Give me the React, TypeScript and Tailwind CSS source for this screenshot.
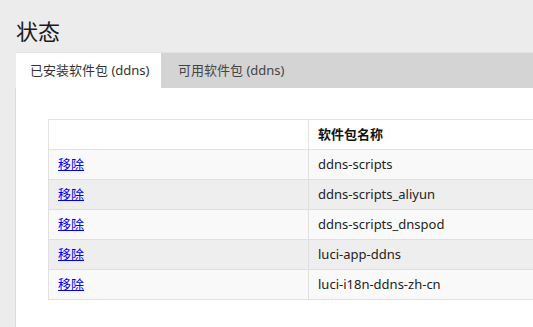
const packages = [
  "ddns-scripts",
  "ddns-scripts_aliyun",
  "ddns-scripts_dnspod",
  "luci-app-ddns",
  "luci-i18n-ddns-zh-cn",
];

export default function App() {
  return (
    <div
      className="w-[533px] h-[327px] overflow-hidden bg-[#ececec] text-[#222] flex flex-col"
      style={{ fontFamily: '"Noto Sans", "Noto Sans CJK SC", sans-serif' }}
    >
      <h2 className="pl-[16px] pt-[16px] h-[52px] text-[22px] leading-[30px] font-normal text-[#1a1a1a]">
        状态
      </h2>

      {/* Tabs */}
      <div className="ml-[16px] flex h-[36px] bg-[#d4d4d4] border-t border-[#e4e4e4] text-[13px]">
        <div className="w-[145px] bg-white flex items-center pl-[14px] text-[#333]">
          已安装软件包 (ddns)
        </div>
        <div className="flex items-center pl-[17px] text-[#444]">可用软件包 (ddns)</div>
      </div>

      {/* Panel */}
      <div className="ml-[15px] flex-1 bg-white border-l border-[#dcdcdc] pl-[32px] pt-[31px] overflow-hidden">
        <table className="w-[600px] border-collapse text-[13px]">
          <thead>
            <tr className="h-[30px] bg-white">
              <th className="w-[260px] border border-[#e3e3e3]"></th>
              <th className="text-left font-bold pl-[9px] border border-[#e3e3e3] text-[#111]">
                软件包名称
              </th>
            </tr>
          </thead>
          <tbody>
            {packages.map((p, i) => (
              <tr
                key={p}
                className={`h-[30px] ${i % 2 === 0 ? "bg-[#f9f9f9]" : "bg-[#eeeeee]"}`}
              >
                <td className="pl-[9px] border border-[#e0e0e0]">
                  <a href="#" className="text-[#0000ee] underline">
                    移除
                  </a>
                </td>
                <td className="pl-[9px] border border-[#e0e0e0] text-[#222]">{p}</td>
              </tr>
            ))}
          </tbody>
        </table>
      </div>
    </div>
  );
}
